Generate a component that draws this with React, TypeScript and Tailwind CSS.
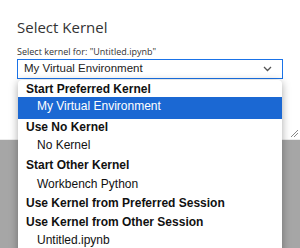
import React from 'react';

const App = () => {
  return (
    <div className="relative w-[300px] h-[248px] overflow-hidden bg-[#a6a6a6]">
      {/* dialog behind the dropdown */}
      <div className="relative h-[140px] bg-white border-b border-[#ececec] px-[17px] pt-[17px] font-['Open_Sans',sans-serif] text-[#333]">
        <h1 className="text-[15px] leading-[20px]">Select Kernel</h1>
        <p className="mt-[9px] text-[9px] leading-[12px]">Select kernel for: "Untitled.ipynb"</p>
        <div className="mt-[1px] flex h-[20px] items-center justify-between border border-[#1a73e8] pl-[6px] pr-[10px] font-['Liberation_Sans',sans-serif] text-[11.5px] text-[#222]">
          <span>My Virtual Environment</span>
          <svg width="9" height="6" viewBox="0 0 9 6" fill="none" stroke="#555" strokeWidth="1.3">
            <path d="M1 1l3.5 3.5L8 1" />
          </svg>
        </div>
        <svg className="absolute right-[2px] bottom-[2px]" width="7" height="7" viewBox="0 0 7 7" stroke="#888" strokeWidth="1">
          <path d="M7 0L0 7M7 3L3 7" />
        </svg>
      </div>

      {/* open listbox */}
      <div className="absolute left-[18px] top-[80px] w-[264px] h-[180px] rounded-t-[4px] bg-white shadow-[0_2px_8px_rgba(0,0,0,0.35)] font-['Liberation_Sans',Arial,sans-serif] text-[12px] text-[#111]">
        <div className="pt-[1px]">
          <div className="h-[16px] pl-[8px] font-bold leading-[16px]">Start Preferred Kernel</div>
          <div className="h-[22px] bg-[#1b68d3] pl-[19px] leading-[19px] text-white">My Virtual Environment</div>
          <div className="h-[17px] pl-[8px] font-bold leading-[17px]">Use No Kernel</div>
          <div className="h-[19px] pl-[19px] leading-[18px]">No Kernel</div>
          <div className="h-[20px] pl-[8px] font-bold leading-[20px]">Start Other Kernel</div>
          <div className="h-[19px] pl-[19px] leading-[19px]">Workbench Python</div>
          <div className="h-[19px] pl-[8px] font-bold leading-[19px]">Use Kernel from Preferred Session</div>
          <div className="h-[18px] pl-[8px] font-bold leading-[18px]">Use Kernel from Other Session</div>
          <div className="h-[18px] pl-[19px] leading-[18px]">Untitled.ipynb</div>
        </div>
      </div>
    </div>
  );
};

export default App;
